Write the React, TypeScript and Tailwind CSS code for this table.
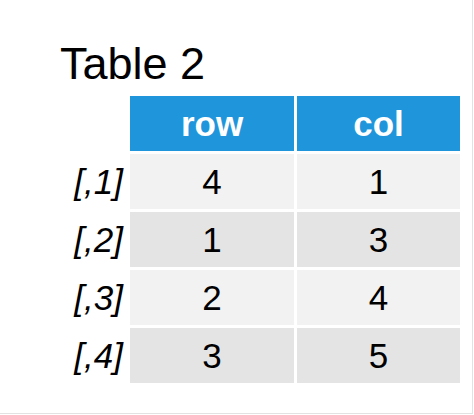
import React from "react";

const rows = [
  { label: "[,1]", row: 4, col: 1 },
  { label: "[,2]", row: 1, col: 3 },
  { label: "[,3]", row: 2, col: 4 },
  { label: "[,4]", row: 3, col: 5 },
];

export default function App() {
  return (
    <div className="w-[474px] h-[415px] bg-white font-['Liberation_Sans',Arial,sans-serif] text-black">
      <div className="w-[473px] h-[414px] border-r border-b border-[#e2e2e2]">
        <h1 className="pl-[60px] pt-[41px] text-[45px] leading-none font-normal">
          Table 2
        </h1>

        <div className="mt-[10px] grid grid-cols-[127px_164px_163px] grid-rows-[55px_55px_55px_55px_55px] gap-x-[3px] gap-y-[3px]">
          <div />
          <div className="flex items-center justify-center bg-[#1f96dc] text-white text-[35px] font-bold leading-none">
            row
          </div>
          <div className="flex items-center justify-center bg-[#1f96dc] text-white text-[35px] font-bold leading-none">
            col
          </div>

          {rows.map((r, i) => {
            const bg = i % 2 === 0 ? "bg-[#f2f2f2]" : "bg-[#e4e4e4]";
            return (
              <React.Fragment key={r.label}>
                <div className="flex items-center justify-end pr-[4px] text-[35px] italic leading-none">
                  {r.label}
                </div>
                <div
                  className={
                    "flex items-center justify-center text-[35px] leading-none " +
                    bg
                  }
                >
                  {r.row}
                </div>
                <div
                  className={
                    "flex items-center justify-center text-[35px] leading-none " +
                    bg
                  }
                >
                  {r.col}
                </div>
              </React.Fragment>
            );
          })}
        </div>
      </div>
    </div>
  );
}
